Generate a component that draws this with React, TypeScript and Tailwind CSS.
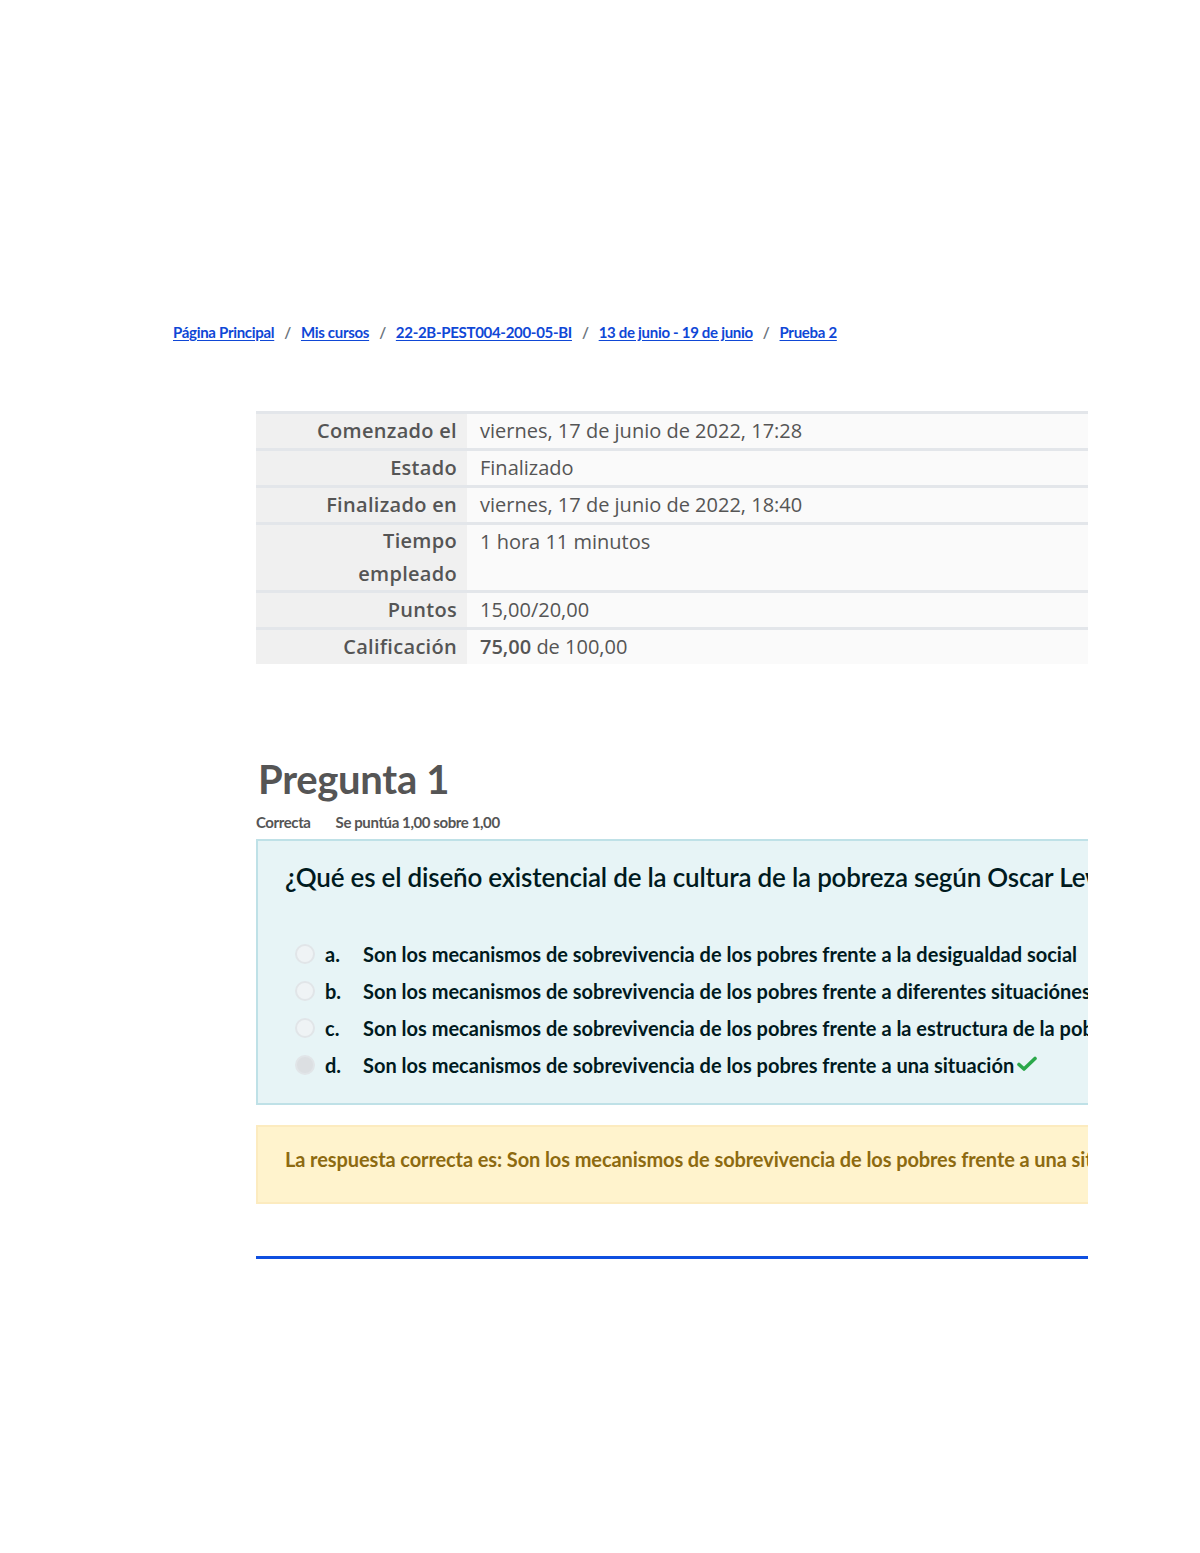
import React from "react";

const crumbs = [
  "Página Principal",
  "Mis cursos",
  "22-2B-PEST004-200-05-BI",
  "13 de junio - 19 de junio",
  "Prueba 2",
];

const rows: { label: React.ReactNode; value: React.ReactNode; tall?: boolean }[] = [
  { label: "Comenzado el", value: "viernes, 17 de junio de 2022, 17:28" },
  { label: "Estado", value: "Finalizado" },
  { label: "Finalizado en", value: "viernes, 17 de junio de 2022, 18:40" },
  {
    label: (
      <>
        Tiempo
        <br />
        empleado
      </>
    ),
    value: "1 hora 11 minutos",
    tall: true,
  },
  { label: "Puntos", value: "15,00/20,00" },
  {
    label: "Calificación",
    value: (
      <>
        <b className="font-semibold">75,00</b> de 100,00
      </>
    ),
  },
];

const options = [
  { letter: "a.", text: "Son los mecanismos de sobrevivencia de los pobres frente a la desigualdad social" },
  { letter: "b.", text: "Son los mecanismos de sobrevivencia de los pobres frente a diferentes situaciónes" },
  { letter: "c.", text: "Son los mecanismos de sobrevivencia de los pobres frente a la estructura de la pobreza" },
  { letter: "d.", text: "Son los mecanismos de sobrevivencia de los pobres frente a una situación", checked: true },
];

function Check() {
  return (
    <svg width="20" height="16" viewBox="0 0 20 16" className="inline-block ml-[3px] -mt-[6px]">
      <path d="M2 8.5 L7 13 L18 2.5" fill="none" stroke="#2ba84a" strokeWidth="3.6" strokeLinecap="round" strokeLinejoin="round" />
    </svg>
  );
}

export default function App() {
  return (
    <div className="w-[1200px] h-[1553px] bg-white font-['Lato',sans-serif]">
      <div className="pt-[320px] pl-[173px]">
        {/* Breadcrumb */}
        <nav className="flex items-center text-[15px] font-bold tracking-[-0.3px] h-[24px]">
          {crumbs.map((c, i) => (
            <React.Fragment key={c}>
              {i > 0 && <span className="text-[#6a737b] mx-[10px] font-bold">/</span>}
              <a href="#" className="text-[#0f47d6] underline underline-offset-2">
                {c}
              </a>
            </React.Fragment>
          ))}
        </nav>
      </div>

      <div className="ml-[256px] w-[832px] overflow-hidden">
        {/* Summary table */}
        <table className="mt-[67px] w-full border-collapse font-['Open_Sans',sans-serif] text-[20px] text-[#555]">
          <tbody>
            {rows.map((r, i) => (
              <tr key={i} className="border-t-[3px] border-[#e3e6ea]">
                <th
                  className={`w-[211px] bg-[#f0f0f0] text-right font-semibold tracking-[0.3px] pr-[10px] align-top py-0 ${
                    r.tall ? "leading-[32.5px]" : "leading-[34px]"
                  }`}
                >
                  {r.label}
                </th>
                <td className="bg-[#fafafa] pl-[13px] font-normal align-top leading-[34px]">{r.value}</td>
              </tr>
            ))}
          </tbody>
        </table>

        {/* Question heading */}
        <h2 className="mt-[92px] ml-[2px] text-[40px] font-bold text-[#555] leading-[46px] tracking-[-0.3px]">
          Pregunta 1
        </h2>
        <div className="flex mt-[11px] text-[15px] font-bold text-[#555] tracking-[-0.4px] leading-[18px]">
          <span>Correcta</span>
          <span className="ml-[25px]">Se puntúa 1,00 sobre 1,00</span>
        </div>

        {/* Question box */}
        <div className="mt-[8px] w-[860px] h-[266px] bg-[#e7f4f6] border-2 border-[#bfe1e7] pl-[27px] pt-[18px] whitespace-nowrap">
          <p className="text-[26px] font-semibold text-[#001a1e] tracking-[-0.2px] leading-[36px]">
            ¿Qué es el diseño existencial de la cultura de la pobreza según Oscar Lewis?
          </p>
          <div className="mt-[40px] flex flex-col">
            {options.map((o) => (
              <div key={o.letter} className="flex items-center h-[37px]">
                <span
                  className={`shrink-0 ml-[10px] w-[20px] h-[20px] rounded-full border-2 border-[#e1e5e8] ${
                    o.checked ? "bg-[#dcdfe2]" : "bg-[#eff3f5]"
                  }`}
                />
                <span className="shrink-0 ml-[10px] w-[38px] text-[20px] font-bold text-[#001a1e]">
                  {o.letter}
                </span>
                <span className="shrink-0 text-[20px] font-bold text-[#001a1e]">
                  {o.text}
                  {o.checked && <Check />}
                </span>
              </div>
            ))}
          </div>
        </div>

        {/* Feedback */}
        <div className="mt-[20px] w-[860px] h-[79px] bg-[#fff3cd] border-2 border-[#fcebbf] pl-[27px] pt-[14px] whitespace-nowrap">
          <p className="text-[20px] font-bold text-[#8d6a10] tracking-[-0.1px] leading-[36px]">
            La respuesta correcta es: Son los mecanismos de sobrevivencia de los pobres frente a una situación
          </p>
        </div>

        <div className="mt-[52px] h-[3px] bg-[#0f4fe0]" />
      </div>
    </div>
  );
}
